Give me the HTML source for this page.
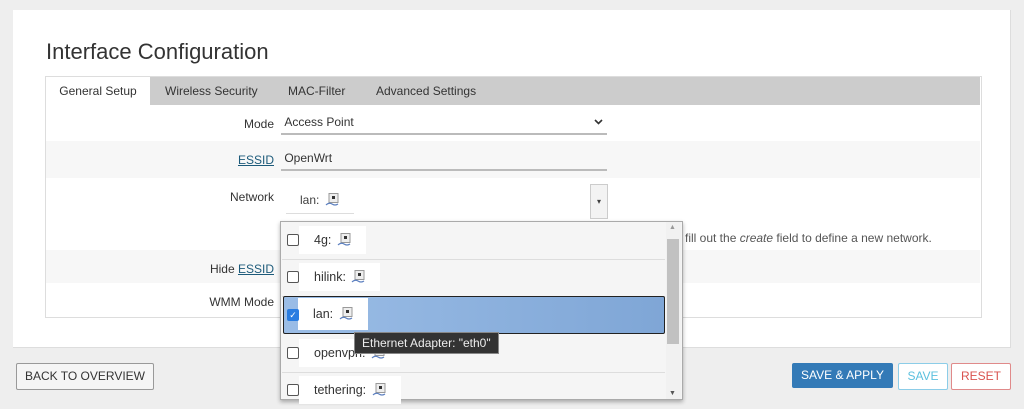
<!DOCTYPE html>
<html><head><style>
body{margin:0;width:1024px;height:405px;background:#eee;font-family:"Liberation Sans",sans-serif;font-size:12px;color:#404040;position:relative;overflow:hidden}
.a{position:absolute}
.card{left:13px;top:10px;width:997px;height:337px;background:#fff;border-right:1px solid #ddd;border-bottom:1px solid #ddd}
h1{position:absolute;left:46px;top:39px;margin:0;font-weight:normal;font-size:22px;color:#333}
.fs{left:45px;top:76px;width:935px;height:240px;border:1px solid #ddd;background:#fff}
.tabs{left:46px;top:77px;width:934px;height:28px;background:#ccc}
.tab{top:0;height:28px;line-height:28px;color:#333;font-size:12px}
.row{left:46px;width:934px}
.lbl{text-align:right;width:228px;left:46px;color:#333}
.lbl u{color:#1c5a7a}
.inp{left:281px;width:326px;border-bottom:2px solid #bbb;color:#333}
.btn{height:25px;line-height:25px;text-align:center;border-radius:2px;font-size:12px}
.dd{left:280px;top:221px;width:401px;height:177px;border:1px solid #aaa;background:#f5f5f5;box-shadow:0 2px 4px rgba(0,0,0,.3)}
.it{left:1px;width:383px;height:37px;border-bottom:1px solid #ddd}
.cb{position:absolute;left:5px;top:12px;width:10px;height:10px;border:1px solid #555;border-radius:2px;background:#fff;z-index:2}
.chip{position:absolute;left:17px;top:4px;height:28px;line-height:28px;background:#fff;padding:0 15px;font-size:12.5px;color:#333}
.ic{display:inline-block;width:14px;height:13px;vertical-align:-2px;margin-left:2px}
</style></head><body>
<svg width="0" height="0" style="position:absolute"><symbol id="n" viewBox="0 0 14 13"><rect x="4" y="0.5" width="9" height="9" fill="#eee" stroke="#999"/><rect x="7" y="3" width="3" height="3" fill="#333"/><path d="M1 12 Q4 9 7 11 T13 11" stroke="#5b7fbf" fill="none" stroke-width="1.2"/></symbol></svg>
<div class="a card"></div>
<h1>Interface Configuration</h1>
<div class="a fs"></div>
<div class="a tabs">
 <div class="a tab" style="left:0;width:104px;background:#fff;text-align:center">General Setup</div>
 <div class="a tab" style="left:119px">Wireless Security</div>
 <div class="a tab" style="left:242px">MAC-Filter</div>
 <div class="a tab" style="left:330px">Advanced Settings</div>
</div>
<div class="a row" style="top:141px;height:37px;background:#f7f7f7"></div>
<div class="a row" style="top:250px;height:33px;background:#f7f7f7"></div>
<div class="a lbl" style="top:117px">Mode</div>
<div class="a inp" style="top:115px;height:18px">&nbsp;Access Point<svg class="a" style="right:4px;top:4px" width="9" height="6" viewBox="0 0 9 6"><path d="M1 1 L4.5 4.5 L8 1" stroke="#333" stroke-width="1.6" fill="none"/></svg></div>
<div class="a lbl" style="top:153px"><u>ESSID</u></div>
<div class="a inp" style="top:151px;height:18px">&nbsp;OpenWrt</div>
<div class="a lbl" style="top:190px">Network</div>
<div class="a" style="left:286px;top:186px;width:68px;height:28px;line-height:28px;background:#fff;border-bottom:1px solid #ddd;padding-left:14px;box-sizing:border-box">lan: <svg class="ic"><use href="#n"/></svg></div>
<div class="a" style="left:590px;top:184px;width:16px;height:33px;border:1px solid #ccc;background:#f3f3f3;font-size:8px;text-align:center;line-height:33px">▾</div>
<div class="a" style="left:685px;top:231px;color:#555">fill out the <i>create</i> field to define a new network.</div>
<div class="a lbl" style="top:262px">Hide <u>ESSID</u></div>
<div class="a lbl" style="top:295px">WMM Mode</div>
<div class="a dd">
 <div class="a it" style="top:0"><span class="cb"></span><div class="chip">4g: <svg class="ic"><use href="#n"/></svg></div></div>
 <div class="a it" style="top:37px"><span class="cb"></span><div class="chip">hilink: <svg class="ic"><use href="#n"/></svg></div></div>
 <div class="a" style="left:2px;top:74px;width:380px;height:36px;border:1px solid #222;border-radius:2px;background:linear-gradient(90deg,#9bbde6,#7fa6d6)"><span class="cb" style="background:#2a7de1;border-color:#2a7de1;top:12px;left:3px;color:#fff;font-size:9px;line-height:10px;text-align:center">✓</span><div class="chip" style="left:14px;top:1px;height:32px;line-height:32px">lan: <svg class="ic"><use href="#n"/></svg></div></div>
 <div class="a it" style="top:113px"><span class="cb"></span><div class="chip">openvpn: <svg class="ic"><use href="#n"/></svg></div></div>
 <div class="a it" style="top:150px;border:0"><span class="cb"></span><div class="chip">tethering: <svg class="ic"><use href="#n"/></svg></div></div>
 <div class="a" style="left:385px;top:0;width:15px;height:177px;background:#f1f1f1"><div class="a" style="left:1px;top:17px;width:12px;height:105px;background:#c1c1c1"></div><div class="a" style="left:3px;top:2px;font-size:7px;color:#999">▲</div><div class="a" style="left:3px;bottom:2px;font-size:7px;color:#555">▼</div></div>
</div>
<div class="a" style="left:354px;top:332px;height:20px;line-height:20px;padding:0 7px;background:#333;color:#eee;border:1px solid #888;font-size:12px">Ethernet Adapter: "eth0"</div>
<div class="a btn" style="left:16px;top:363px;width:136px;border:1px solid #999;background:#f5f5f5;color:#333">BACK TO OVERVIEW</div>
<div class="a btn" style="left:792px;top:363px;width:101px;background:#337ab7;color:#fff">SAVE &amp; APPLY</div>
<div class="a btn" style="left:898px;top:363px;width:48px;border:1px solid #8ccde8;color:#5bc0de;background:#fff">SAVE</div>
<div class="a btn" style="left:951px;top:363px;width:58px;border:1px solid #e08a8a;color:#d9534f;background:#fff">RESET</div>
</body></html>
